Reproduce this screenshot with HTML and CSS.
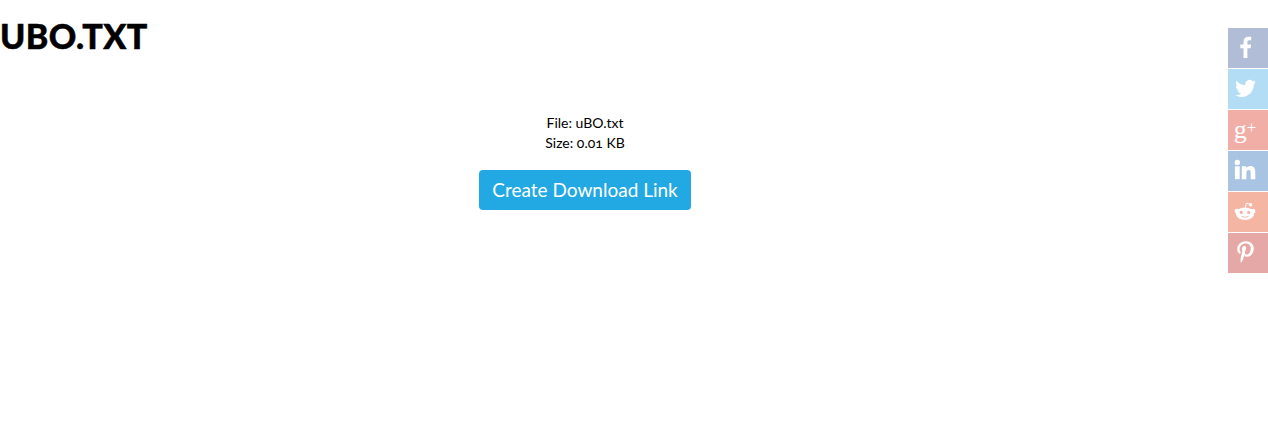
FILE: index.html
```html
<!DOCTYPE html>
<html lang="en">
<head>
    <meta charset="UTF-8">
    <meta name="viewport" content="width=device-width, initial-scale=1.0">
    <title>uBO.txt</title>
    <link rel="stylesheet" href="styles.css">
</head>
<body>

    <main class="container">
        <h1>UBO.TXT</h1>
        <div class="file-box">
            <p class="file-info">File: uBO.txt<br>Size: 0.01 KB</p>
            <a class="btn" href="#">Create Download Link</a>
        </div>
    </main>

    <ul class="social">
        <li class="fb"><a href="#" aria-label="Facebook">
            <svg viewBox="0 0 24 24" width="22" height="22"><path d="M14.6 24V13.4h3.5l.6-4.2h-4.1V6.7c0-1.2.4-2 2.1-2h2.1V1c-.4-.1-1.700-.2-3.100-.2-3.100 0-5.300 1.900-5.300 5.400v3H6.900v4.200h3.500V24z"/></svg>
        </a></li>
        <li class="tw"><a href="#" aria-label="Twitter">
            <svg viewBox="0 0 24 24" width="21" height="21"><path d="M23.953 4.57a10 10 0 01-2.825.775 4.958 4.958 0 002.163-2.723c-.951.555-2.005.959-3.127 1.184a4.92 4.92 0 00-8.384 4.482C7.69 8.095 4.067 6.13 1.64 3.162a4.822 4.822 0 00-.666 2.475c0 1.71.87 3.213 2.188 4.096a4.904 4.904 0 01-2.228-.616v.06a4.923 4.923 0 003.946 4.827 4.996 4.996 0 01-2.212.085 4.936 4.936 0 004.604 3.417 9.867 9.867 0 01-6.102 2.105c-.39 0-.779-.023-1.17-.067a13.995 13.995 0 007.557 2.209c9.053 0 13.998-7.496 13.998-13.985 0-.21 0-.42-.015-.63A9.935 9.935 0 0024 4.59z"/></svg>
        </a></li>
        <li class="gp"><a href="#" aria-label="Google Plus"><span class="gp-mark">g<span class="gp-plus">+</span></span></a></li>
        <li class="li"><a href="#" aria-label="LinkedIn">
            <svg viewBox="0 0 24 24" width="22" height="22"><rect x="1" y="8" width="5.200" height="14"/><circle cx="3.600" cy="3.800" r="2.900"/><path d="M8.500 8h5v2c.8-1.300 2.300-2.400 4.300-2.400 4.300 0 5.400 2.800 5.400 6.900V22h-5v-6.700c0-1.900-.3-3.300-2.200-3.300s-2.500 1.300-2.500 3.300V22h-5z"/></svg>
        </a></li>
        <li class="rd"><a href="#" aria-label="Reddit">
            <svg viewBox="0 0 24 24" width="22" height="22"><circle cx="3" cy="12" r="2.400"/><circle cx="21" cy="12" r="2.400"/><ellipse cx="12" cy="15" rx="10" ry="6.800"/><circle cx="18.200" cy="5.200" r="1.800"/><path d="M12.300 8.500l1.200-5 4.500 1.200" fill="none" stroke="#fff" stroke-width="1"/><circle class="rd-cut" cx="8" cy="13.500" r="1.800"/><circle class="rd-cut" cx="16" cy="13.500" r="1.800"/><path class="rd-smile" d="M8 17.600c2.300 1.500 5.700 1.500 8 0"/></svg>
        </a></li>
        <li class="pin"><a href="#" aria-label="Pinterest">
            <svg viewBox="0 0 384 512" width="17" height="22"><path d="M204 6.500C101.400 6.500 0 74.900 0 185.600 0 256 39.600 296 63.600 296c9.900 0 15.600-27.600 15.600-35.400 0-9.300-23.700-29.100-23.700-67.800 0-80.400 61.200-137.400 140.400-137.400 68.100 0 118.500 38.700 118.500 109.800 0 53.100-21.300 152.700-90.300 152.700-24.900 0-46.200-18-46.200-43.800 0-37.800 26.400-74.400 26.400-113.400 0-66.200-93.900-54.200-93.900 25.800 0 16.800 2.100 35.400 9.600 50.700-13.800 59.400-42 147.900-42 209.100 0 18.900 2.700 37.500 4.500 56.400 3.400 3.800 1.700 3.400 6.900 1.500 50.400-69 48.600-82.500 71.400-172.800 12.300 23.400 44.100 36 69.300 36 106.200 0 153.900-103.500 153.900-196.800C384 71.300 298.200 6.500 204 6.500z"/></svg>
        </a></li>
    </ul>

</body>
</html>
```

FILE: styles.css
```css
body {
    font-family: 'Lato', 'Open Sans', sans-serif;
    font-size: 14px;
    line-height: 20px;
    margin: 0;
    padding: 0;
    color: #000;
    background: #fff;
}

.container {
    width: 1170px;
}

h1 {
    font-size: 34px;
    line-height: 40px;
    font-weight: 900;
    letter-spacing: 0.4px;
    -webkit-text-stroke: 0.5px #000;
    margin: 0;
    padding-top: 16px;
}

.file-box {
    margin-top: 57px;
    text-align: center;
}

.file-info {
    margin: 0 0 17px 0;
    font-variant-numeric: oldstyle-nums;
}

.btn {
    display: inline-block;
    background-color: #22a9e3;
    color: #fff;
    text-decoration: none;
    font-size: 19px;
    line-height: 24px;
    padding: 8px 0;
    width: 212px;
    border-radius: 4px;
}

.social {
    position: fixed;
    top: 28px;
    right: 0;
    list-style: none;
    margin: 0;
    padding: 0;
    display: flex;
    flex-direction: column;
    gap: 1px;
}

.social a {
    display: flex;
    align-items: center;
    justify-content: center;
    box-sizing: border-box;
    width: 40px;
    height: 40px;
    padding: 0 6px 2px 0;
    color: #fff;
    text-decoration: none;
}

.social svg {
    fill: #fff;
}

.fb a { background-color: #b1bdd6; }
.tw a { background-color: #b3dcf5; }
.gp a { background-color: #f0aea6; }
.li a { background-color: #a9c4e2; }
.rd a { background-color: #f5b5a3; }
.pin a { background-color: #e6a8a6; }

.gp-mark {
    font-family: 'Liberation Serif', serif;
    font-size: 26px;
    line-height: 30px;
}

.gp-plus {
    font-size: 17px;
    vertical-align: 5px;
}

.rd-cut {
    fill: #f5b5a3;
}

.rd-smile {
    fill: none;
    stroke: #f5b5a3;
    stroke-width: 1;
}
```
